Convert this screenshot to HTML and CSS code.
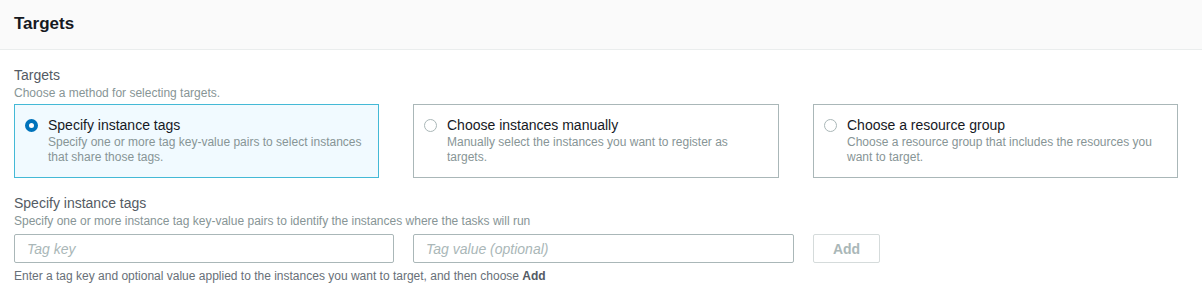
FILE: index.html
```html
<!DOCTYPE html>
<html lang="en">

<head>
    <meta charset="UTF-8">
    <meta name="viewport" content="width=device-width, initial-scale=1.0">
    <title>Targets</title>
    <link rel="stylesheet" href="styles.css">
</head>

<body>
    <div class="panel">
        <div class="panel-head">
            <h2>Targets</h2>
        </div>
        <div class="panel-body">
            <div class="label">Targets</div>
            <div class="desc">Choose a method for selecting targets.</div>

            <div class="cards">
                <div class="card selected">
                    <span class="radio"></span>
                    <div class="card-text">
                        <div class="card-title">Specify instance tags</div>
                        <div class="card-desc">Specify one or more tag key-value pairs to select instances that share those tags.</div>
                    </div>
                </div>
                <div class="card">
                    <span class="radio"></span>
                    <div class="card-text">
                        <div class="card-title">Choose instances manually</div>
                        <div class="card-desc">Manually select the instances you want to register as targets.</div>
                    </div>
                </div>
                <div class="card">
                    <span class="radio"></span>
                    <div class="card-text">
                        <div class="card-title">Choose a resource group</div>
                        <div class="card-desc">Choose a resource group that includes the resources you want to target.</div>
                    </div>
                </div>
            </div>

            <div class="label section">Specify instance tags</div>
            <div class="desc">Specify one or more instance tag key-value pairs to identify the instances where the tasks will run</div>

            <div class="tag-row">
                <input class="tag-input" type="text" placeholder="Tag key">
                <input class="tag-input" type="text" placeholder="Tag value (optional)">
                <button class="add-btn" disabled>Add</button>
            </div>
            <div class="hint">Enter a tag key and optional value applied to the instances you want to target, and then choose <b>Add</b></div>
        </div>
    </div>
</body>

</html>
```

FILE: styles.css
```css
* {
    margin: 0;
    padding: 0;
    box-sizing: border-box;
}

body {
    font-family: "Liberation Sans", Arial, sans-serif;
    background-color: #fff;
    color: #16191f;
}

.panel-head {
    height: 50px;
    background-color: #fafafa;
    border-bottom: 1px solid #eaeded;
    padding-left: 14px;
}

.panel-head h2 {
    font-size: 17px;
    line-height: 47px;
    font-weight: bold;
    color: #16191f;
}

.panel-body {
    padding: 15px 24px 0 14px;
}

.label {
    font-size: 14px;
    line-height: 20px;
    color: #545b64;
}

.label.section {
    margin-top: 15px;
}

.desc {
    font-size: 12px;
    line-height: 16px;
    color: #879596;
}

.cards {
    display: grid;
    grid-template-columns: 365px 366px 365px;
    column-gap: 34px;
    margin-top: 3px;
}

.card {
    display: flex;
    align-items: flex-start;
    height: 74px;
    padding: 10px 12px 0 10px;
    border: 1px solid #aab7b8;
    background-color: #fff;
}

.card.selected {
    border-color: #44b9d6;
    background-color: #f1faff;
}

.radio {
    flex: none;
    width: 13px;
    height: 13px;
    margin-top: 4px;
    margin-right: 10px;
    border: 1px solid #aab7b8;
    border-radius: 50%;
    background-color: #fff;
}

.card.selected .radio {
    border: 4px solid #0073bb;
}

.card-title {
    font-size: 14px;
    line-height: 20px;
    color: #16191f;
}

.card-desc {
    font-size: 12px;
    line-height: 15px;
    color: #879596;
}

.tag-row {
    display: flex;
    align-items: center;
    margin-top: 5px;
}

.tag-input {
    width: 380px;
    height: 29px;
    padding: 0 12px;
    margin-right: 19px;
    border: 1px solid #aab7b8;
    border-radius: 2px;
    font-family: inherit;
    font-size: 14px;
}

.tag-input + .tag-input {
    width: 381px;
}

.tag-input::placeholder {
    color: #aab7b8;
    font-style: italic;
}

.add-btn {
    width: 67px;
    height: 29px;
    border: 1px solid #d5dbdb;
    border-radius: 2px;
    background-color: #fff;
    color: #aab7b8;
    font-family: inherit;
    font-size: 14px;
    font-weight: bold;
}

.hint {
    margin-top: 5px;
    font-size: 12px;
    line-height: 16px;
    color: #687078;
}

.hint b {
    color: #545b64;
}
```
